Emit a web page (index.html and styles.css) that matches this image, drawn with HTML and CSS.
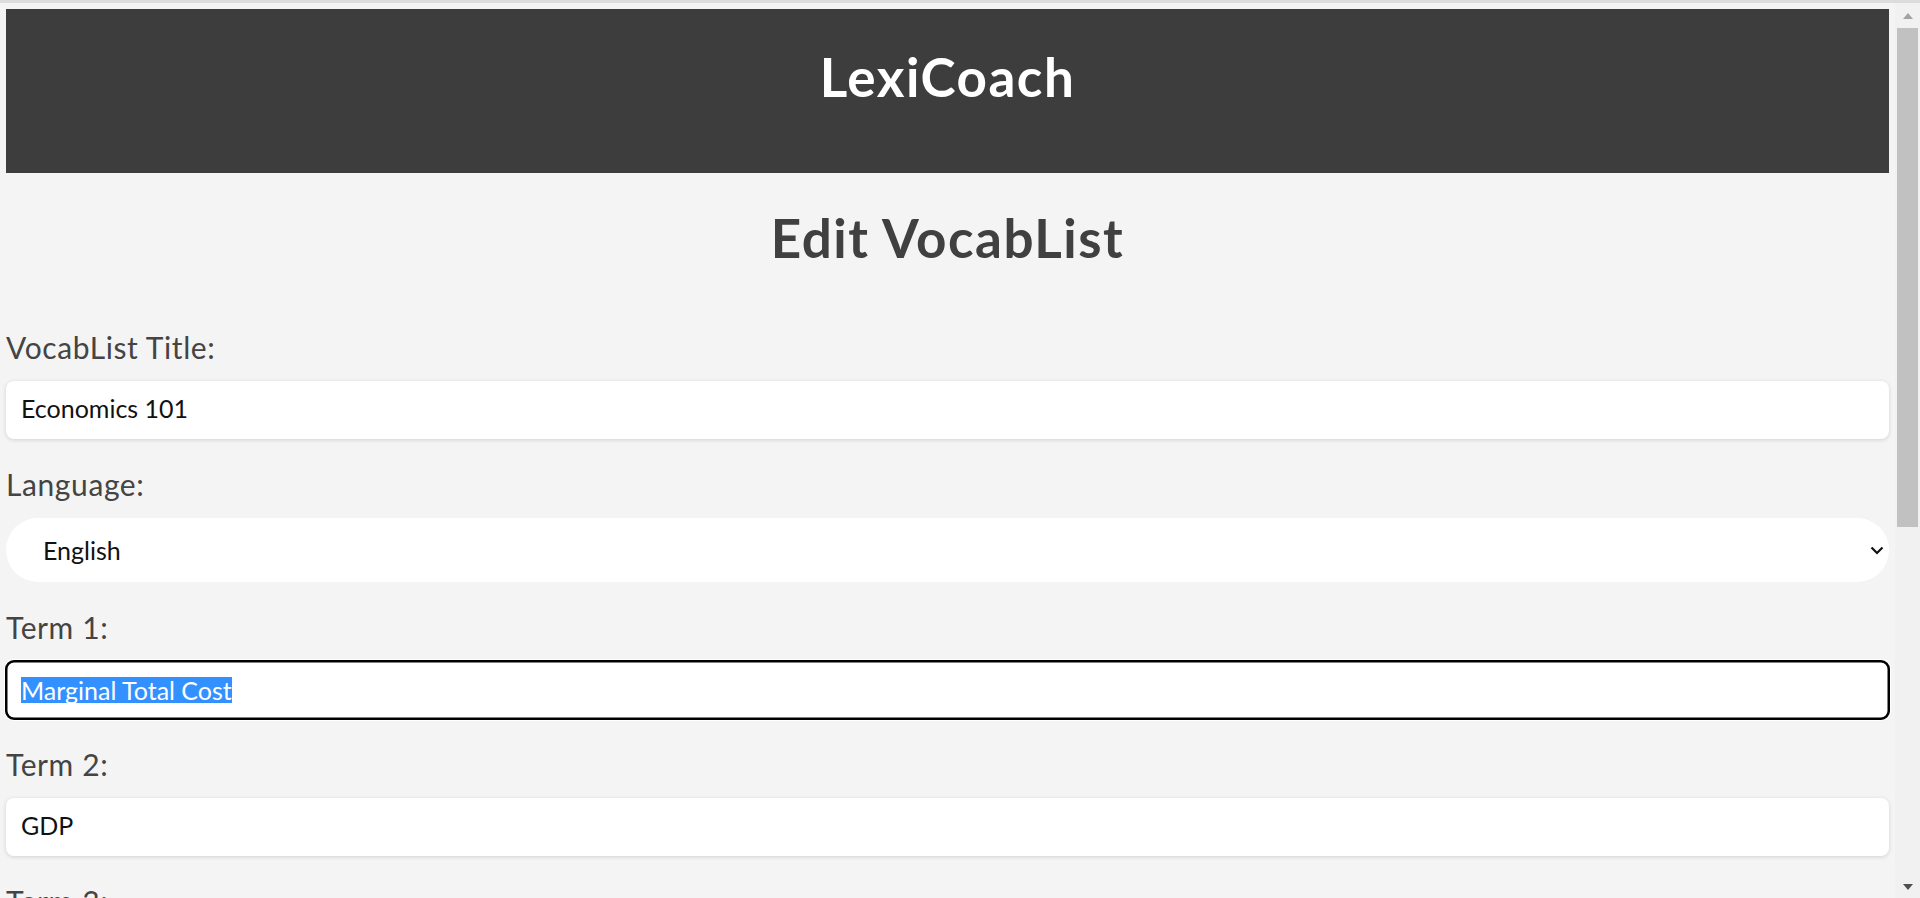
FILE: index.html
```html
<!DOCTYPE html>
<html lang="en">
<head>
<meta charset="utf-8">
<title>LexiCoach – Edit VocabList</title>
<link rel="stylesheet" href="styles.css">
</head>
<body>
<div class="app">
  <header class="site-header">
    <h1 class="brand">LexiCoach</h1>
  </header>
  <main class="editor">
    <h2 class="page-title">Edit VocabList</h2>
    <form class="vocab-form">
      <div class="field">
        <label class="field-label" for="title">VocabList Title:</label>
        <input id="title" class="text-input" type="text" value="Economics 101">
      </div>
      <div class="field">
        <label class="field-label" for="language">Language:</label>
        <div class="select-wrap">
          <select id="language" class="select">
            <option>English</option>
            <option>Spanish</option>
            <option>French</option>
          </select>
          <svg class="chevron" width="14" height="9" viewBox="0 0 14 9" aria-hidden="true"><path d="M1.5 1.5l5.5 5.5 5.5-5.5" fill="none" stroke="#111" stroke-width="2.2"/></svg>
        </div>
      </div>
      <div class="field">
        <label class="field-label">Term 1:</label>
        <div class="text-input is-focused" role="textbox"><span class="selection">Marginal Total Cost</span></div>
      </div>
      <div class="field">
        <label class="field-label" for="term2">Term 2:</label>
        <input id="term2" class="text-input" type="text" value="GDP">
      </div>
      <div class="field">
        <label class="field-label" for="term3">Term 3:</label>
        <input id="term3" class="text-input" type="text" value="">
      </div>
    </form>
  </main>
</div>
<div class="scrollbar" aria-hidden="true">
  <div class="sb-btn"><span class="sb-arrow-up"></span></div>
  <div class="sb-thumb"></div>
  <div class="sb-track"></div>
  <div class="sb-btn sb-btn-down"><span class="sb-arrow-down"></span></div>
</div>
</body>
</html>
```
FILE: styles.css
```css
html, body {
  height: 100%;
  margin: 0;
  overflow: hidden;
}

body {
  box-sizing: border-box;
  border-top: 3px solid #dcdcdc;
  background: #f4f4f4;
  font-family: "Lato", "Noto Sans", sans-serif;
  display: flex;
  flex-direction: row;
}

.app {
  flex: 1;
  min-width: 0;
  overflow: hidden;
  padding: 6px 6px 30px;
}

/* scrollbar */
.scrollbar {
  width: 25px;
  flex: none;
  background: #f1f1f1;
  display: flex;
  flex-direction: column;
}

.sb-btn {
  height: 25px;
  flex: none;
  display: flex;
  align-items: center;
  justify-content: center;
}

.sb-btn-down {
  height: 20px;
  align-items: flex-start;
}

.sb-arrow-up {
  width: 0;
  height: 0;
  border-left: 5.5px solid transparent;
  border-right: 5.5px solid transparent;
  border-bottom: 6px solid #a3a3a3;
}

.sb-arrow-down {
  width: 0;
  height: 0;
  margin-top: 6px;
  border-left: 5.5px solid transparent;
  border-right: 5.5px solid transparent;
  border-top: 6px solid #505050;
}

.sb-thumb {
  height: 499px;
  flex: none;
  margin: 0 2px;
  background: #c1c1c1;
}

.sb-track {
  flex: 1;
}

/* header */
.site-header {
  background: #3d3d3d;
  padding: 36px 0 64px;
  text-align: center;
}

.brand {
  margin: 0;
  color: #ffffff;
  font-size: 53px;
  line-height: 64px;
  font-weight: 700;
  letter-spacing: 1.5px;
}

/* editor */
.page-title {
  margin: 33px 0 59px;
  text-align: center;
  color: #404040;
  font-size: 53px;
  line-height: 64px;
  font-weight: 700;
  letter-spacing: 1.5px;
}

.vocab-form {
  display: flex;
  flex-direction: column;
  gap: 27px;
}

.field {
  display: flex;
  flex-direction: column;
}

.field-label {
  display: block;
  color: #444444;
  font-size: 30px;
  line-height: 36px;
  letter-spacing: 0.6px;
  margin-bottom: 16px;
}

.text-input {
  box-sizing: border-box;
  width: 100%;
  height: 58px;
  margin: 0;
  padding: 0 15px 4px;
  border: none;
  border-radius: 8px;
  background: #ffffff;
  box-shadow: 0 1px 4px rgba(0, 0, 0, 0.14);
  font-family: "Lato", "Noto Sans", sans-serif;
  font-size: 25px;
  color: #111111;
  outline: none;
}

div.text-input {
  display: flex;
  align-items: center;
  padding: 0 15px;
}

.text-input.is-focused {
  outline: 2px solid #000000;
  outline-offset: -1px;
  box-shadow: 0 0 0 2px #ffffff, inset 0 0 0 1.5px #000000;
}

.selection {
  display: inline-block;
  line-height: 26px;
  background: #3390ff;
  color: #ffffff;
}

.select-wrap {
  position: relative;
}

.select {
  box-sizing: border-box;
  display: block;
  width: 100%;
  height: 64px;
  margin: 0;
  padding: 0 40px 0 37px;
  border: none;
  border-radius: 32px;
  background: #ffffff;
  appearance: none;
  -webkit-appearance: none;
  font-family: "Lato", "Noto Sans", sans-serif;
  font-size: 25px;
  color: #111111;
  outline: none;
}

.chevron {
  position: absolute;
  right: 5px;
  top: 28px;
  pointer-events: none;
}
```
